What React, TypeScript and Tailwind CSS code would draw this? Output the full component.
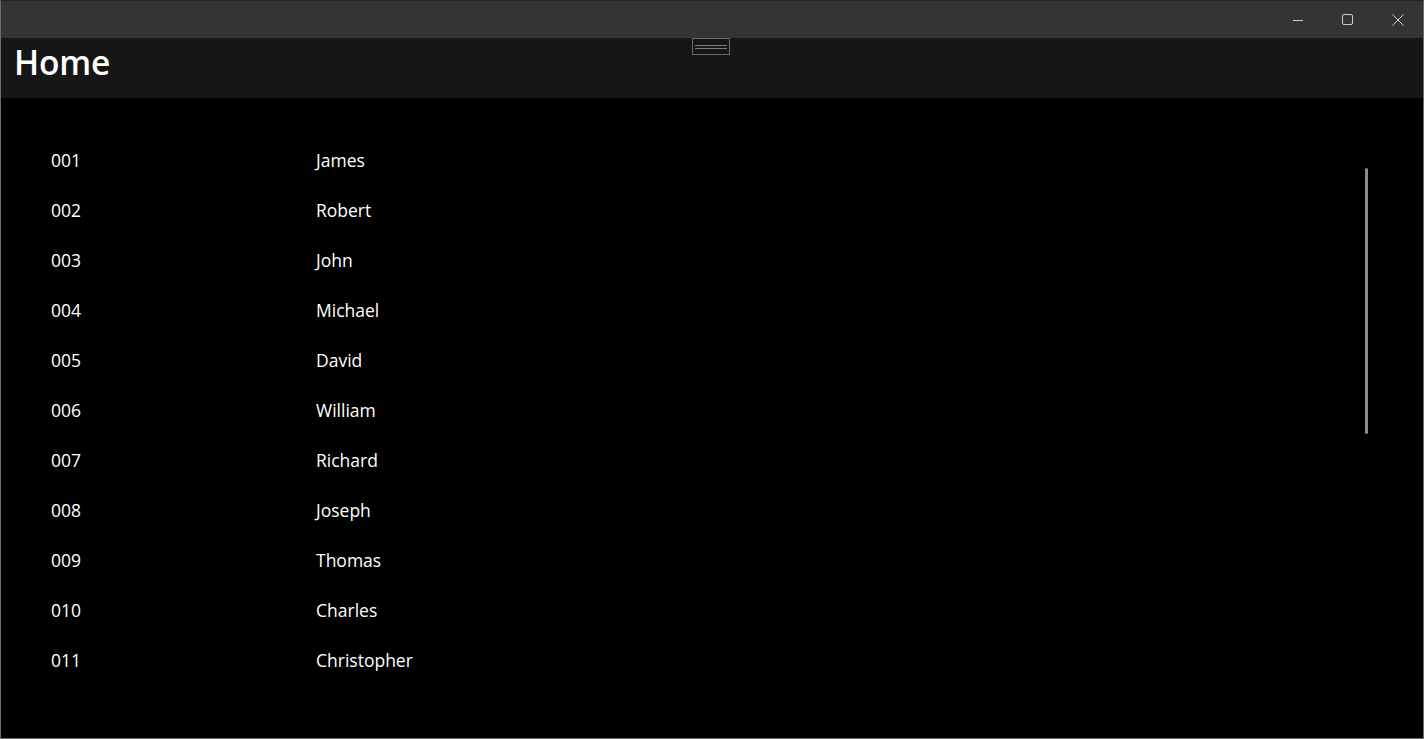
const people = [
  ["001", "James"],
  ["002", "Robert"],
  ["003", "John"],
  ["004", "Michael"],
  ["005", "David"],
  ["006", "William"],
  ["007", "Richard"],
  ["008", "Joseph"],
  ["009", "Thomas"],
  ["010", "Charles"],
  ["011", "Christopher"],
];

export default function App() {
  return (
    <div
      className="flex h-[739px] w-[1424px] flex-col overflow-hidden border border-[#6e6e6e] border-t-[#262626] bg-black text-white"
      style={{ fontFamily: '"Open Sans", "Noto Sans", sans-serif' }}
    >
      {/* title bar */}
      <div className="flex h-[37px] shrink-0 items-center justify-end bg-[#343434]">
        <button className="flex h-[37px] w-[50px] items-center justify-center text-[#cfcfcf]">
          <svg width="12" height="12" viewBox="0 0 12 12">
            <path d="M1 6.5h10" stroke="currentColor" strokeWidth="1" />
          </svg>
        </button>
        <button className="flex h-[37px] w-[50px] items-center justify-center text-[#cfcfcf]">
          <svg width="12" height="12" viewBox="0 0 12 12">
            <rect x="0.5" y="0.5" width="10" height="10" rx="1.5" fill="none" stroke="currentColor" strokeWidth="1" />
          </svg>
        </button>
        <button className="flex h-[37px] w-[50px] items-center justify-center text-[#cfcfcf]">
          <svg width="12" height="12" viewBox="0 0 12 12">
            <path d="M0.5 0.5l11 11M11.5 0.5l-11 11" stroke="currentColor" strokeWidth="1" />
          </svg>
        </button>
      </div>

      {/* header */}
      <div className="relative flex h-[60px] shrink-0 items-center bg-[#161616] px-[13px] pb-[10px]">
        <h1 className="text-[33.5px] font-semibold leading-none tracking-[-0.2px]">Home</h1>
        <div className="absolute left-[691px] top-0 flex h-[17px] w-[38px] flex-col items-center justify-center gap-[2px] border border-[#6a6a6a]">
          <div className="h-[1px] w-[32px] bg-[#7a7a7a]" />
          <div className="h-[1px] w-[32px] bg-[#7a7a7a]" />
        </div>
      </div>

      {/* list */}
      <div className="relative flex-1">
        <div className="flex flex-col pt-[37px]">
          {people.map(([id, name]) => (
            <div key={id} className="flex h-[50px] items-center text-[17.5px]">
              <span className="w-[315px] pl-[50px]">{id}</span>
              <span>{name}</span>
            </div>
          ))}
        </div>
        <div className="absolute left-[1364px] top-[70px] h-[266px] w-[3px] rounded-full bg-[#8a8a8a]" />
      </div>
    </div>
  );
}
